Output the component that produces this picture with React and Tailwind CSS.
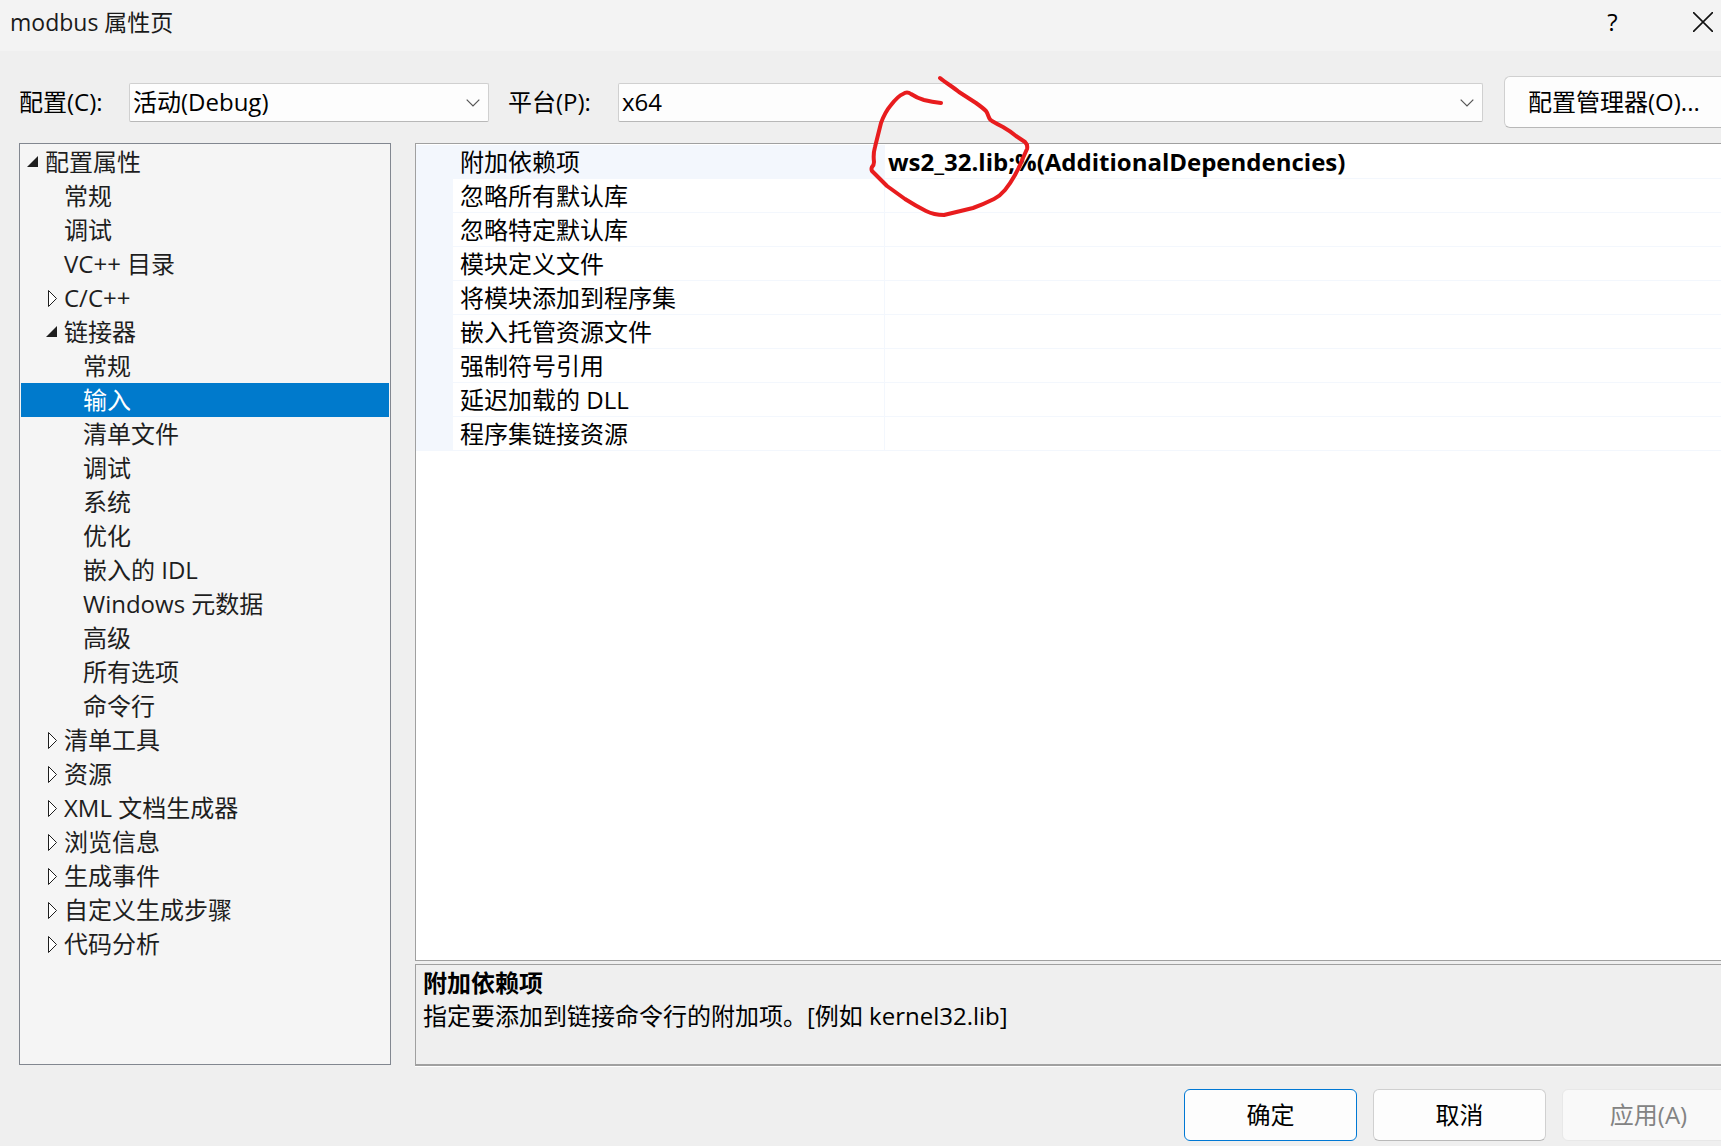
import React, { useState } from "react";

const TREE = [
  { id: "root", label: "配置属性", level: 0, state: "open" },
  { id: "general", label: "常规", level: 1 },
  { id: "debugging", label: "调试", level: 1 },
  { id: "vcdirs", label: "VC++ 目录", level: 1 },
  { id: "cpp", label: "C/C++", level: 1, state: "closed" },
  { id: "linker", label: "链接器", level: 1, state: "open" },
  { id: "linker-general", label: "常规", level: 2 },
  { id: "linker-input", label: "输入", level: 2 },
  { id: "linker-manifest", label: "清单文件", level: 2 },
  { id: "linker-debug", label: "调试", level: 2 },
  { id: "linker-system", label: "系统", level: 2 },
  { id: "linker-optimize", label: "优化", level: 2 },
  { id: "linker-idl", label: "嵌入的 IDL", level: 2 },
  { id: "linker-winmd", label: "Windows 元数据", level: 2 },
  { id: "linker-advanced", label: "高级", level: 2 },
  { id: "linker-all", label: "所有选项", level: 2 },
  { id: "linker-cmd", label: "命令行", level: 2 },
  { id: "manifest", label: "清单工具", level: 1, state: "closed" },
  { id: "resources", label: "资源", level: 1, state: "closed" },
  { id: "xml", label: "XML 文档生成器", level: 1, state: "closed" },
  { id: "browse", label: "浏览信息", level: 1, state: "closed" },
  { id: "events", label: "生成事件", level: 1, state: "closed" },
  { id: "custom", label: "自定义生成步骤", level: 1, state: "closed" },
  { id: "analysis", label: "代码分析", level: 1, state: "closed" },
];

const PROPERTIES = [
  { name: "附加依赖项", value: "ws2_32.lib;%(AdditionalDependencies)" },
  { name: "忽略所有默认库", value: "" },
  { name: "忽略特定默认库", value: "" },
  { name: "模块定义文件", value: "" },
  { name: "将模块添加到程序集", value: "" },
  { name: "嵌入托管资源文件", value: "" },
  { name: "强制符号引用", value: "" },
  { name: "延迟加载的 DLL", value: "" },
  { name: "程序集链接资源", value: "" },
];

const INDENT = ["pl-1", "pl-[23px]", "pl-[42px]"];

function Arrow({ state }) {
  return (
    <svg width="20" height="34" viewBox="0 0 20 34" className="shrink-0" aria-hidden="true">
      {state === "open" && <path d="M13 11v11H2z" fill="#1e1e1e" />}
      {state === "closed" && (
        <path d="M4.5 9.5v16l8-8z" fill="#fff" stroke="#1e1e1e" strokeWidth="1" />
      )}
    </svg>
  );
}

function Dropdown({ id, label, options, className }) {
  return (
    <div className={`flex items-center ${className}`}>
      <label htmlFor={id} className="w-[110px] shrink-0 whitespace-nowrap">
        {label}
      </label>
      <div className="relative min-w-0 flex-1">
        <select
          id={id}
          className="block h-[39px] w-full appearance-none rounded-xs border border-[#d0d0d0] border-b-[#b8b8b8] bg-[#fdfdfd] pl-[3px] text-black"
        >
          {options.map((o) => (
            <option key={o}>{o}</option>
          ))}
        </select>
        <svg
          width="14"
          height="8"
          viewBox="0 0 14 8"
          className="pointer-events-none absolute top-4 right-[9px]"
          aria-hidden="true"
        >
          <path d="M0.7 0.7L7 7L13.3 0.7" fill="none" stroke="#555" strokeWidth="1.2" />
        </svg>
      </div>
    </div>
  );
}

export default function App() {
  const [activeNode, setActiveNode] = useState("linker-input");
  const [activeProp, setActiveProp] = useState(0);

  return (
    <div className="relative flex min-h-screen flex-col overflow-hidden bg-[#efefef] font-['Open_Sans','Noto_Sans_CJK_SC',sans-serif] text-[24px] leading-[34px] text-black">
      {/* Title bar */}
      <header className="flex h-[51px] items-center bg-[#f3f3f3] pb-[7px] pl-[10px]">
        <h1 className="flex-1 text-[23px] text-[#1a1a1a]">modbus 属性页</h1>
        <button type="button" aria-label="帮助" className="w-[91px] text-center">
          ?
        </button>
        <button type="button" aria-label="关闭" className="flex w-[63px] justify-end pr-2 pl-6">
          <svg width="20" height="20" viewBox="0 0 20 20" aria-hidden="true">
            <path d="M0 0 20 20M20 0 0 20" stroke="#111" strokeWidth="1.6" />
          </svg>
        </button>
      </header>

      {/* Configuration and platform */}
      <div className="flex items-center pt-[25px] pl-[19px]">
        <Dropdown
          id="config"
          label="配置(C):"
          options={["活动(Debug)", "Debug", "Release", "所有配置"]}
          className="w-[470px] shrink-0"
        />
        <Dropdown
          id="platform"
          label="平台(P):"
          options={["x64", "Win32", "所有平台"]}
          className="ml-[19px] flex-1"
        />
        <button
          type="button"
          className="ml-[21px] h-[52px] w-[217px] shrink-0 rounded-l-md border border-r-0 border-[#d0d0d0] border-b-[#b8b8b8] bg-[#fdfdfd] pl-[23px] text-left whitespace-nowrap"
        >
          配置管理器(O)...
        </button>
      </div>

      <main className="mt-[15px] flex flex-1 gap-6 pl-[19px]">
        {/* Tree */}
        <nav className="mb-px w-[372px] shrink-0 border border-[#828790] bg-[#f5f5f5] p-px text-[#1e1e1e]">
          <ul>
            {TREE.map((node) => (
              <li key={node.id}>
                <button
                  type="button"
                  onClick={() => setActiveNode(node.id)}
                  className={`flex h-[34px] w-full items-center whitespace-nowrap ${INDENT[node.level]} ${
                    node.id === activeNode ? "bg-[#007acc] text-white" : ""
                  }`}
                >
                  <Arrow state={node.state} />
                  {node.label}
                </button>
              </li>
            ))}
          </ul>
        </nav>

        {/* Property grid */}
        <section className="flex min-w-0 flex-1 flex-col gap-[3px]">
          <div className="flex-1 border border-r-0 border-[#a0a0a0] bg-white pt-px">
            <table className="w-full table-fixed border-separate border-spacing-0">
              <colgroup>
                <col className="w-[37px]" />
                <col className="w-[432px]" />
                <col />
              </colgroup>
              <tbody>
                {PROPERTIES.map((prop, i) => (
                  <tr key={prop.name} onClick={() => setActiveProp(i)}>
                    <td className="bg-[#f3f7fd] p-0" />
                    <th
                      scope="row"
                      className={`h-[34px] border-r border-b border-[#f3f7fd] p-0 pl-[7px] text-left leading-[33px] font-normal ${
                        i === activeProp ? "bg-[#f3f7fd]" : ""
                      }`}
                    >
                      {prop.name}
                    </th>
                    <td className="h-[34px] border-b border-[#f3f7fd] p-0 pl-[3px] leading-[33px] font-bold">
                      {prop.value}
                    </td>
                  </tr>
                ))}
              </tbody>
            </table>
          </div>
          <div className="h-[102px] border border-r-0 border-b-2 border-[#a0a0a0] pt-px pl-[7px] leading-[33px] shadow-[0_1px_0_#fff]">
            <h2 className="font-bold">{PROPERTIES[activeProp].name}</h2>
            <p>指定要添加到链接命令行的附加项。[例如 kernel32.lib]</p>
          </div>
        </section>
      </main>

      {/* Dialog buttons */}
      <footer className="mt-[23px] mb-[5px] flex justify-end gap-4">
        <button type="button" className="h-[52px] w-[173px] rounded-md border border-[#0078d4] bg-[#fdfdfd]">
          确定
        </button>
        <button
          type="button"
          className="h-[52px] w-[173px] rounded-md border border-[#d0d0d0] border-b-[#b8b8b8] bg-[#fdfdfd]"
        >
          取消
        </button>
        <button
          type="button"
          disabled
          className="-mr-[14px] h-[52px] w-[173px] rounded-md border border-[#e8e8e8] bg-[#f9f9f9] text-[#838383]"
        >
          应用(A)
        </button>
      </footer>

      {/* Red pen mark around the library name */}
      <svg
        width="170"
        height="150"
        viewBox="865 72 170 150"
        className="pointer-events-none absolute top-[72px] left-[865px]"
        aria-hidden="true"
      >
        <path
          d="M940 78C946 83 953 87 959 92L976 103Q983 108 986 111C989 115 988 119 992 121Q997 124 1003 127Q1010 131 1016 136L1025 142Q1028 145 1027 149L1023 158Q1020 166 1015 175Q1010 184 1005 190Q1000 196 994 199Q984 204 973 208L944 215Q934 215 926 211Q916 206 905 199L887 186L872 171Q871 169 872 167Q874 165 874 162Q873 154 875 147L881 123Q885 112 891 105Q898 96 903 94Q907 91 911 94Q917 98 924 100Q932 102 941 103"
          fill="none"
          stroke="#e81c1e"
          strokeWidth="4"
          strokeLinecap="round"
          strokeLinejoin="round"
        />
      </svg>
    </div>
  );
}
